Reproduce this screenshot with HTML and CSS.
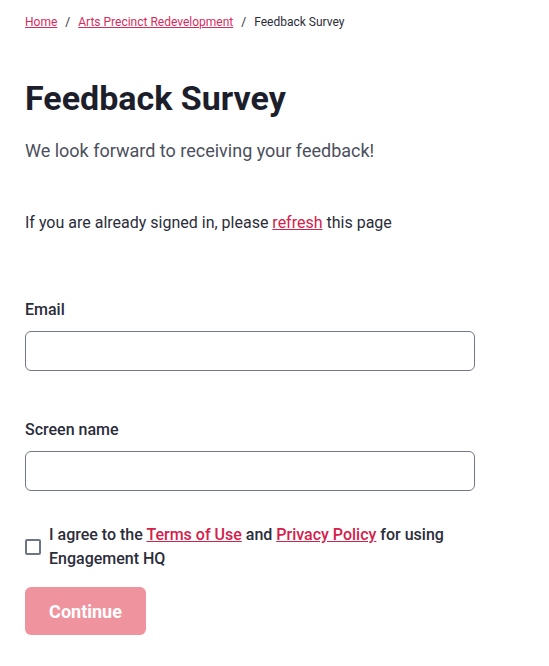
FILE: index.html
```html
<!DOCTYPE html>
<html lang="en">
<head>
<meta charset="UTF-8">
<meta name="viewport" content="width=device-width, initial-scale=1.0">
<title>Feedback Survey</title>
<link rel="stylesheet" href="styles.css">
</head>
<body>
<div class="page">
<nav class="breadcrumb">
<a href="#">Home</a>
<span class="sep">/</span>
<a href="#">Arts Precinct Redevelopment</a>
<span class="sep">/</span>
<span>Feedback Survey</span>
</nav>

<h1 class="title">Feedback Survey</h1>
<p class="lead">We look forward to receiving your feedback!</p>

<p class="signed-in">If you are already signed in, please <a href="#">refresh</a> this page</p>

<form class="survey-form">
<div class="field">
<label for="email">Email</label>
<input type="email" id="email">
</div>
<div class="field">
<label for="screen-name">Screen name</label>
<input type="text" id="screen-name">
</div>
<label class="agree">
<input type="checkbox" class="agree-box">
<span>I agree to the <a href="#">Terms of Use</a> and <a href="#">Privacy Policy</a> for using Engagement HQ</span>
</label>
<button type="submit" class="continue" disabled>Continue</button>
</form>
</div>
</body>
</html>
```

FILE: styles.css
```css
body {
margin: 0;
font-family: Roboto, "Liberation Sans", Arial, sans-serif;
color: #2b2d3a;
background-color: #fff;
}
a {
color: #d4204a;
}
.page {
padding: 14px 25px 30px;
width: 450px;
}
.breadcrumb {
font-size: 12px;
line-height: 16px;
color: #2b2d3a;
display: flex;
gap: 8px;
}
.breadcrumb a {
color: #d82b5c;
}
.title {
margin: 46px 0 0;
font-size: 34px;
line-height: 44px;
font-weight: 700;
color: #1c1e2b;
}
.lead {
margin: 17px 0 0;
font-size: 18px;
line-height: 28px;
color: #4b4f5c;
}
.signed-in {
margin: 46px 0 0;
font-size: 16px;
line-height: 24px;
}
.survey-form {
margin-top: 63px;
}
.field {
display: flex;
flex-direction: column;
gap: 9px;
margin-bottom: 47px;
}
.field label {
font-size: 16px;
line-height: 24px;
font-weight: 500;
color: #2b2d3a;
}
.field input {
height: 40px;
box-sizing: border-box;
border: 1px solid #717789;
border-radius: 6px;
font-size: 16px;
padding: 0 12px;
}
.agree {
display: flex;
align-items: center;
gap: 8px;
font-size: 16px;
line-height: 24px;
font-weight: 500;
margin-top: -15px;
}
.agree-box {
appearance: none;
margin: 0;
flex: none;
width: 16px;
height: 16px;
border: 2px solid #6d7486;
border-radius: 2px;
box-sizing: border-box;
}
.continue {
margin-top: 16px;
width: 121px;
height: 48px;
border: none;
border-radius: 6px;
background-color: #ef949f;
color: #fff;
font-family: inherit;
font-size: 18px;
font-weight: 700;
}
```
